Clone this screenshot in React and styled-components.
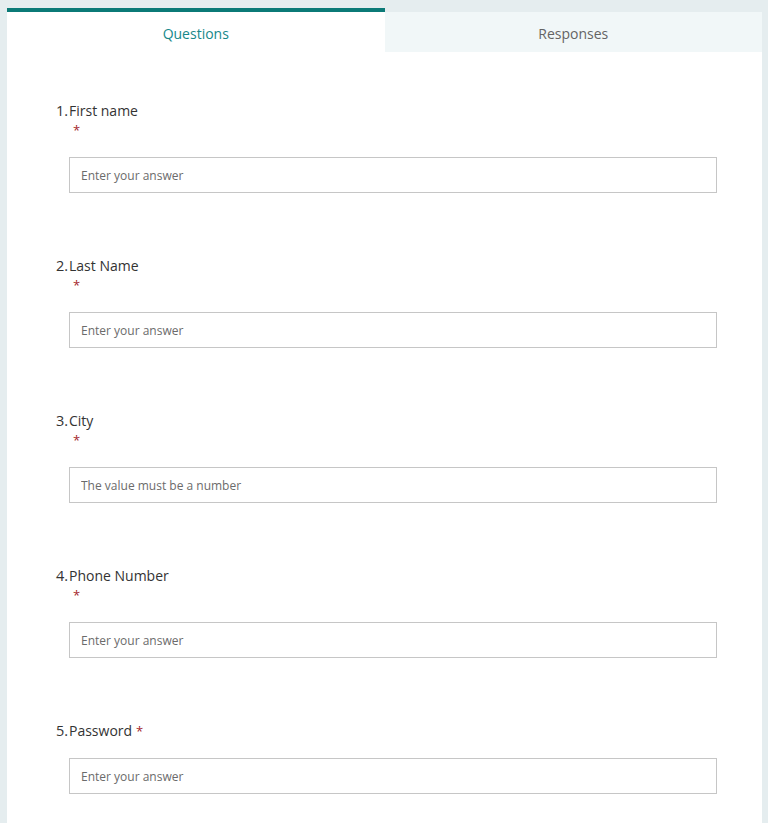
import React from "react";
import styled, {createGlobalStyle} from "styled-components";

const GlobalStyle = createGlobalStyle`
  html, body {
    margin: 0;
    padding: 0;
    background: #e5edef;
    font-family: "Open Sans", "Noto Sans", Arial, sans-serif;
  }
`

const Page = styled.div`
  padding: 8px 6px 0 7px;
`

const Tabs = styled.div`
  display: flex;
  align-items: flex-start;
`

const Tab = styled.div`
  flex: 1;
  display: flex;
  align-items: center;
  justify-content: center;
  box-sizing: border-box;
  font-size: 14px;
  padding-top: 3px;
  height: ${p => p.$active ? "44px" : "40px"};
  margin-top: ${p => p.$active ? "0" : "4px"};
  border-top: ${p => p.$active ? "4px solid #0b7a77" : "none"};
  background: ${p => p.$active ? "#ffffff" : "#f1f7f8"};
  color: ${p => p.$active ? "#17888a" : "#646464"};
`

const Panel = styled.div`
  background: #ffffff;
  padding: 49px 45px 30px 49px;
`

const Question = styled.div`
  display: grid;
  grid-template-columns: 13px 1fr;
  margin-bottom: 63px;

  &:last-child {
    margin-bottom: 0;
  }
`

const Number = styled.div`
  font-size: 14.5px;
  line-height: 20px;
  color: #333333;
  white-space: nowrap;
`

const Title = styled.div`
  font-size: 14px;
  line-height: 20px;
  color: #333333;
  margin-bottom: 17px;
`

const Star = styled.span`
  color: #a4262c;
  font-size: 13px;
  display: ${p => p.$wrap ? "block" : "inline"};
  line-height: 19px;
  margin-left: 4px;
`

const Answer = styled.input`
  grid-column: 2;
  box-sizing: border-box;
  width: 648px;
  height: 36px;
  border: 1px solid #c6c6c6;
  border-radius: 0;
  padding: 0 11px;
  font-family: "Open Sans", "Noto Sans", Arial, sans-serif;
  font-size: 12px;
  color: #333333;
  outline: none;

  &::placeholder {
    color: #6b6b6b;
  }
`

const questions = [
  {title: "First name", hint: "Enter your answer", wrap: true},
  {title: "Last Name", hint: "Enter your answer", wrap: true},
  {title: "City", hint: "The value must be a number", wrap: true},
  {title: "Phone Number", hint: "Enter your answer", wrap: true},
  {title: "Password", hint: "Enter your answer", wrap: false},
]

const App = () => {
  return (<Page>
    <GlobalStyle/>
    <Tabs>
      <Tab $active>Questions</Tab>
      <Tab>Responses</Tab>
    </Tabs>
    <Panel>
      {questions.map ((q, i) => (
        <Question key={q.title}>
          <Number>{i + 1}.</Number>
          <Title>
            {q.title}
            <Star $wrap={q.wrap}>*</Star>
          </Title>
          <Answer type="text" placeholder={q.hint}/>
        </Question>
      ))}
    </Panel>
  </Page>);
};

export default App;
